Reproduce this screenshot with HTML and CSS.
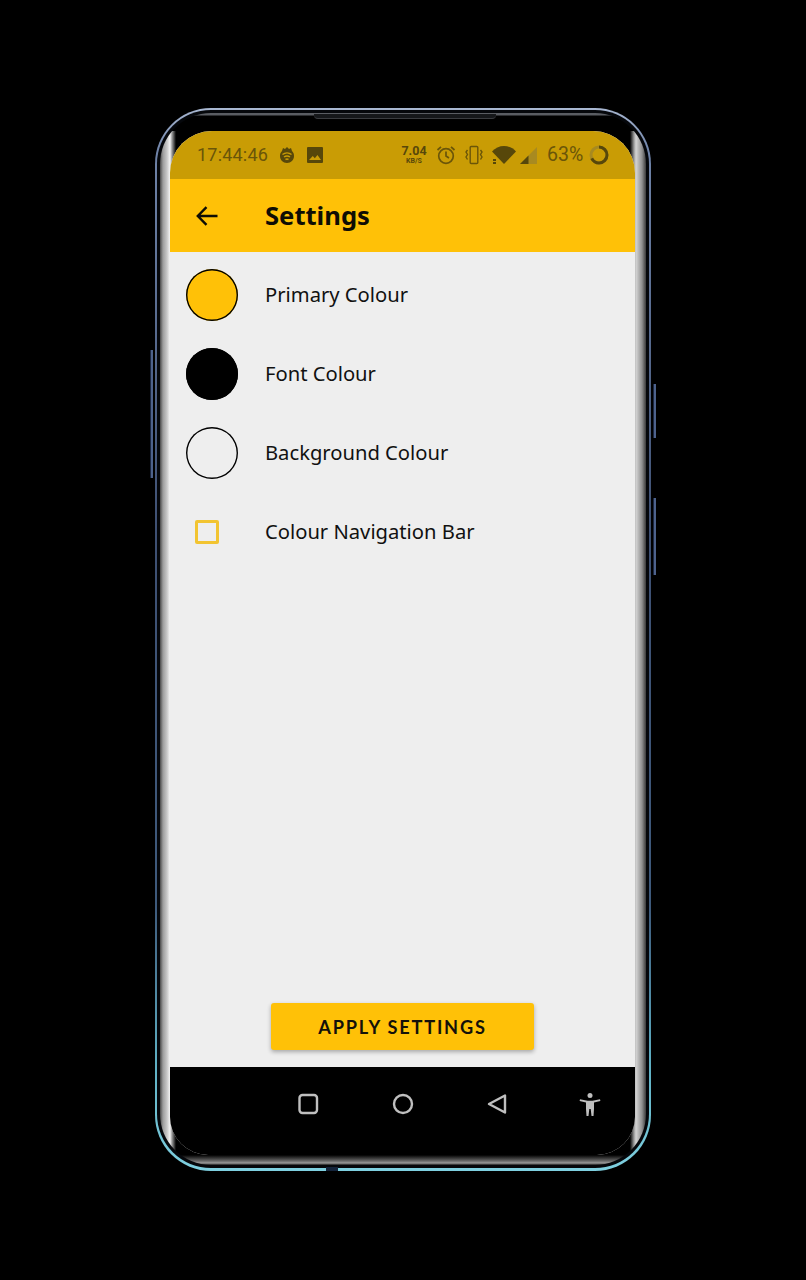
FILE: index.html
```html
<!DOCTYPE html>
<html lang="en">
<head>
<meta charset="utf-8">
<title>Settings</title>
<link rel="stylesheet" href="styles.css">
</head>
<body>
<div class="phone">
  <span class="key key-left"></span>
  <span class="key key-right-a"></span>
  <span class="key key-right-b"></span>
  <span class="notch"></span>
  <div class="rim">
    <div class="bezel">
      <span class="speaker"></span>
      <div class="screen">
        <div class="statusbar">
          <span class="clock">17:44:46</span>
          <svg class="st-bot" viewBox="0 0 16 18"><path d="M8 1l2 2 2-1 1 3c1.500 1.500 2 3 2 5 0 4-3 7-7 7s-7-3-7-7c0-2 .5-3.500 2-5l1-3 2 1z"/><path class="cut" d="M3.500 8.500c2.600-2 6.400-2 9 0M5 11c1.800-1.300 4.200-1.300 6 0M6.500 13.500c1-.6 2-.6 3 0"/></svg>
          <svg class="st-img" viewBox="0 0 16 16"><path fill-rule="evenodd" d="M1 0h14a1 1 0 0 1 1 1v14a1 1 0 0 1-1 1H1a1 1 0 0 1-1-1V1a1 1 0 0 1 1-1zm1 13h12l-3.500-5-2.700 3.200-2-2.200z"/></svg>
          <span class="speed"><b>7.04</b><i>KB/S</i></span>
          <svg class="st-alarm" viewBox="0 0 20 20"><circle cx="10" cy="11" r="7.300"/><path d="M10 6.500V11l3 2M1.500 5L5 1.800M18.500 5L15 1.800"/></svg>
          <svg class="st-vib" viewBox="0 0 18 20"><rect x="5.200" y="1.500" width="7.600" height="17" rx="1"/><path d="M2.500 5L1 7l1.500 2.500L1 12l1.500 2.500M15.500 5L17 7l-1.500 2.500L17 12l-1.500 2.500"/></svg>
          <svg class="st-wifi" viewBox="0 0 24 18"><path d="M0 5.500C3 2 7.500 0 12 0s9 2 12 5.500L12 18z"/><path d="M1 13h3v2H1zM1 16h3v2H1z"/></svg>
          <svg class="st-signal" viewBox="0 0 18 18"><path class="dim" d="M18 0v18H0z"/><path d="M9 9v9H0z"/></svg>
          <span class="pct">63%</span>
          <svg class="st-batt" viewBox="0 0 20 20"><circle class="track" cx="10" cy="10" r="8"/><circle class="fill" cx="10" cy="10" r="8" pathLength="100" stroke-dasharray="68 100" transform="rotate(-90 10 10)"/></svg>
        </div>
        <header class="appbar">
          <svg class="back" viewBox="0 0 22 20"><path d="M21.500 10H2M10.500 1.200L1.800 10l8.700 8.800"/></svg>
          <h1 class="title">Settings</h1>
        </header>
        <main class="content">
          <ul class="rows">
            <li class="row"><span class="swatch swatch-primary"></span><span class="label">Primary Colour</span></li>
            <li class="row"><span class="swatch swatch-font"></span><span class="label">Font Colour</span></li>
            <li class="row"><span class="swatch"></span><span class="label">Background Colour</span></li>
            <li class="row"><span class="check-slot"><span class="check"></span></span><span class="label">Colour Navigation Bar</span></li>
          </ul>
          <button class="apply" type="button">APPLY SETTINGS</button>
        </main>
        <nav class="navbar">
          <svg viewBox="0 0 24 24"><rect x="3.500" y="3" width="17.500" height="18" rx="3"/></svg>
          <svg viewBox="0 0 24 24"><circle cx="12" cy="12" r="9"/></svg>
          <svg viewBox="0 0 24 24"><path d="M20 3.500v17L4 12z"/></svg>
          <svg class="a11y" viewBox="0 0 24 24"><circle cx="12" cy="3.500" r="2.500"/><path d="M2 7.300l7.500 1.500h5L22 7.300l.4 1.600-6.400 1.700v6.400L15.500 24h-2l-.8-7h-1.400l-.8 7h-2L8 17V10.600L1.600 8.900z"/></svg>
        </nav>
      </div>
    </div>
  </div>
</div>
</body>
</html>
```
FILE: styles.css
```css
* { box-sizing: border-box; }
html, body { margin: 0; padding: 0; background: #000; }
body { width: 806px; height: 1280px; padding: 108px 0 0 155px; overflow: hidden; font-family: "Noto Sans", sans-serif; }

.phone {
  position: relative;
  width: 496px;
  height: 1063px;
  padding: 2px 2px 3px;
  border-radius: 56px;
  background: linear-gradient(180deg, #a9b8d2 0, #6f83a8 4%, #3e5073 40%, #3e5a7c 75%, #5fb0c4 90%, #7fd0e0 100%);
}
.key { position: absolute; width: 3px; background: #4d628c; border-left: 1px solid #1c2740; }
.key-left { left: -5px; top: 242px; height: 128px; }
.key-right-a { right: -5px; top: 276px; height: 54px; }
.key-right-b { right: -5px; top: 390px; height: 77px; }
.notch { position: absolute; left: 171px; bottom: 0; width: 12px; height: 4px; background: #14233a; }

.rim {
  height: 100%;
  padding: 3px;
  border-radius: 54px;
  background: #05070b;
}
.bezel {
  position: relative;
  height: 100%;
  padding: 18px 11px 10px 10px;
  border-radius: 51px;
  background:
    linear-gradient(#5a5d63 0, #5a5d63 2px, #000 3px, #000 18px, transparent 18px),
    linear-gradient(0deg, #1a1a1a 0, #9a9a9a 2px, #6a6a6a 4px, #000 10px, transparent 10px),
    linear-gradient(90deg, #4a4a4a 0, #9d9d9d 3px, #c8c8c8 7px, #f5f5f5 10px, #9a9a9a 12px, #000 16px, #000 470px, #9a9a9a 474px, #d4d4d4 476px, #8f8f8f 482px, #3a3a3a 486px);
}
.speaker {
  position: absolute;
  left: 154px;
  top: 1px;
  width: 182px;
  height: 5px;
  border-radius: 0 0 4px 4px;
  background: #15171a;
  border-bottom: 1px solid #3a3c40;
}
.screen {
  display: flex;
  flex-direction: column;
  height: 100%;
  overflow: hidden;
  border-radius: 42px 42px 38px 38px;
  background: #eee;
}

.statusbar {
  flex: none;
  display: flex;
  align-items: center;
  height: 48px;
  padding: 0 26px 0 27px;
  background: #c99c05;
  color: #6a5509;
}
.statusbar svg { flex: none; display: block; }
.clock { font: 400 18px/1 Roboto, sans-serif; letter-spacing: .2px; width: 71px; }
.st-bot { width: 16px; height: 18px; margin-left: 11px; fill: #57470a; }
.st-bot .cut { fill: none; stroke: #c99c05; stroke-width: 1.500; }
.st-img { width: 16px; height: 16px; margin-left: 12px; fill: #57470a; }
.speed { display: flex; flex-direction: column; align-items: center; width: 24px; margin-left: 79px; color: #57470a; font-family: Roboto, sans-serif; }
.speed b { font-size: 12.500px; line-height: 12px; font-weight: 700; }
.speed i { font-size: 7px; line-height: 8px; font-weight: 700; font-style: normal; }
.st-alarm { width: 20px; height: 20px; margin-left: 10px; fill: none; stroke: #6a5509; stroke-width: 1.700; }
.st-vib { width: 18px; height: 20px; margin-left: 9px; fill: none; stroke: #6a5509; stroke-width: 1.400; }
.st-wifi { width: 24px; height: 18px; margin-left: 9px; fill: #57470a; }
.st-signal { width: 17px; height: 17px; margin-left: 4px; fill: #57470a; }
.st-signal .dim { fill: #a88a20; }
.pct { width: 37px; margin-left: 10px; font: 400 19.500px/1 Roboto, sans-serif; }
.st-batt { width: 20px; height: 20px; margin-left: 6px; fill: none; stroke-width: 3; }
.st-batt .track { stroke: #a88a20; }
.st-batt .fill { stroke: #57470a; }

.appbar {
  flex: none;
  display: flex;
  align-items: center;
  height: 73px;
  padding-left: 26px;
  background: #ffc107;
  color: #0f0d04;
}
.back { flex: none; width: 22px; height: 20px; fill: none; stroke: #0f0d04; stroke-width: 2.400; }
.title { margin: 0 0 0 47px; font-size: 25.600px; line-height: 1; font-weight: 700; }

.content {
  flex: 1;
  min-height: 0;
  display: flex;
  flex-direction: column;
  align-items: center;
  justify-content: space-between;
  padding: 3px 0 17px;
}
.rows { align-self: stretch; margin: 0; padding: 0 0 0 16px; list-style: none; }
.row { display: flex; align-items: center; gap: 27px; height: 79px; }
.label { font-size: 20.200px; line-height: 1; color: #111; }
.swatch { flex: none; width: 52px; height: 52px; border-radius: 50%; box-shadow: inset 0 0 0 1.400px #000; }
.swatch-primary { background: #ffc107; }
.swatch-font { background: #000; }
.check-slot { flex: none; width: 52px; padding-left: 9px; }
.check { display: block; width: 24px; height: 24px; border: 3px solid #f2c431; border-radius: 2px; }

.apply {
  width: 263px;
  height: 47px;
  padding: 2px 0 0;
  border: 0;
  border-radius: 3px;
  background: #ffc107;
  box-shadow: 0 2px 4px rgba(0, 0, 0, .3);
  color: #14110a;
  font: 700 18.200px/1 Lato, sans-serif;
  letter-spacing: 1.800px;
}

.navbar {
  flex: none;
  display: flex;
  align-items: flex-start;
  gap: 70.500px;
  height: 88px;
  padding: 25px 0 0 126px;
  background: #000;
}
.navbar svg { flex: none; width: 24px; height: 24px; fill: none; stroke: #bfbfbf; stroke-width: 2.400; stroke-linejoin: round; }
.navbar .a11y { fill: #bfbfbf; stroke: none; margin-left: -2px; }
```
